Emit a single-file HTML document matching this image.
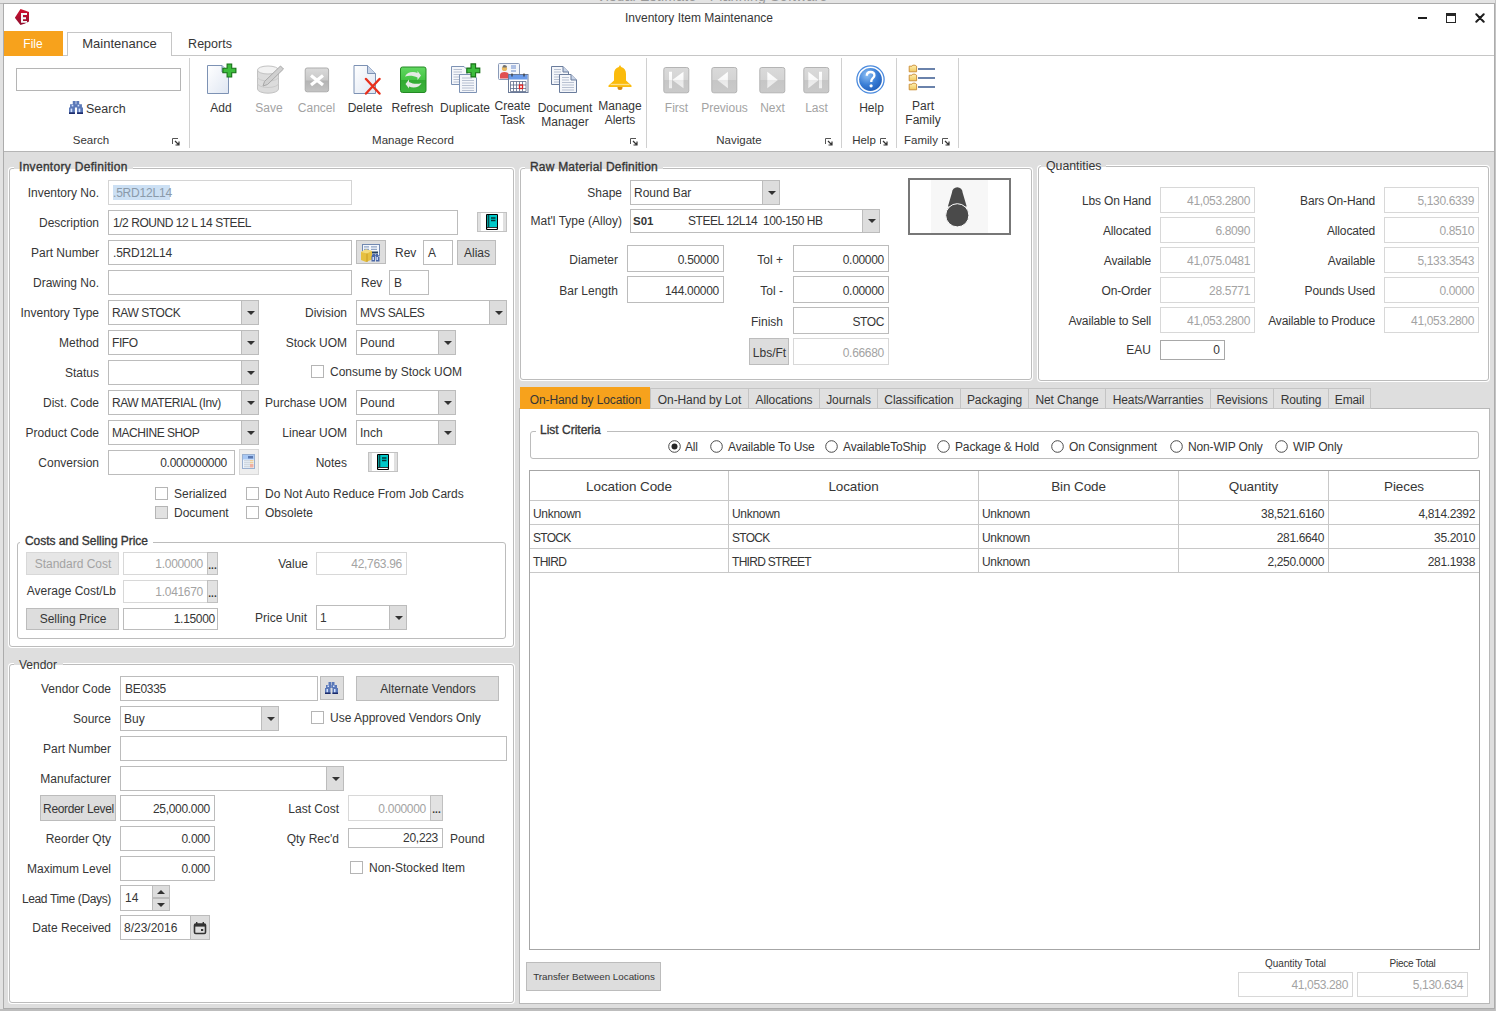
<!DOCTYPE html>
<html><head><meta charset="utf-8"><style>
html,body{margin:0;padding:0;}
body{width:1496px;height:1011px;position:relative;overflow:hidden;background:#e2e2e2;font-family:"Liberation Sans",sans-serif;color:#262626;}
body div, body svg{position:absolute;box-sizing:border-box;}
</style></head><body>

<div style="left:0px;top:0px;width:1496px;height:4px;background:#e4e4e4;"></div>
<div style="left:0px;top:3px;width:1496px;height:1px;background:#b9b9b9;"></div>
<div style="left:562px;top:0;width:300px;height:3px;overflow:hidden;"><div style="left:0;top:-12px;width:300px;height:16px;line-height:16px;font-size:14px;color:#9a9a9a;text-align:center;white-space:pre;letter-spacing:0.25px;">Visual EstiMate - Planning Software</div></div>
<div style="left:3px;top:3px;width:1492px;height:1006px;background:#dedede;border:1px solid #acacac;"></div>
<div style="left:0px;top:1009px;width:1496px;height:2px;background:#bdbdbd;"></div>
<div style="left:1495px;top:0px;width:1px;height:1011px;background:#c4c4c4;"></div>
<div style="left:4px;top:4px;width:1490px;height:148px;background:#fff;"></div>
<div style="left:4px;top:151px;width:1490px;height:1px;background:#b5b5b5;"></div>
<svg style="left:14px;top:8px" width="16" height="18" viewBox="0 0 16 18"><defs><linearGradient id="ag" x1="0" y1="0" x2="0" y2="1"><stop offset="0" stop-color="#d0102e"/><stop offset="1" stop-color="#8e1030"/></linearGradient></defs><path d="M1 9.5L6.5 1L11 2.5L15 4V13.5L11 15.5L6.5 17L1 10Z" fill="url(#ag)"/><path d="M7 5H13V7H9V9.3H12V11.2H9V13H13V14.8H7Z" fill="#f4fbfb"/></svg>
<div style="left:399px;width:600px;text-align:center;top:10.0px;height:16px;line-height:16px;font-size:12px;color:#363636;white-space:pre;">Inventory Item Maintenance</div>
<div style="left:1418px;top:17px;width:9px;height:2px;background:#1e1e1e;"></div>
<div style="left:1446px;top:13px;width:10px;height:10px;background:transparent;border:1px solid #262626;border-top-width:3px;"></div>
<svg style="left:1475px;top:13px" width="10" height="10"><path d="M1.3 1.3L8.7 8.7M8.7 1.3L1.3 8.7" stroke="#1e1e1e" stroke-width="2" stroke-linecap="round"/><rect x="3.5" y="3.5" width="3" height="3" fill="#1e1e1e"/></svg>
<div style="left:4px;top:55px;width:1490px;height:1px;background:#c6c6c6;"></div>
<div style="left:4px;top:31px;width:59px;height:25px;background:#f7a21c;"></div>
<div style="left:-267px;width:600px;text-align:center;top:35.5px;height:16px;line-height:16px;font-size:12px;color:#fff;white-space:pre;">File</div>
<div style="left:67px;top:32px;width:105px;height:24px;background:#fff;border:1px solid #c6c6c6;border-bottom:none;"></div>
<div style="left:-180.5px;width:600px;text-align:center;top:36.0px;height:16px;line-height:16px;font-size:13px;color:#363636;white-space:pre;">Maintenance</div>
<div style="left:-90px;width:600px;text-align:center;top:35.5px;height:16px;line-height:16px;font-size:12.5px;color:#363636;white-space:pre;">Reports</div>
<div style="left:16px;top:68px;width:165px;height:23px;background:#fff;border:1px solid #b5b5b5;"></div>
<svg style="left:69px;top:101px" width="14" height="13" viewBox="0 0 13 12"><path d="M3.5 0H6.2V3H6.5V6H5.5V12H0V6H1V3H3.5Z" fill="#5a78b8"/><path d="M9.5 0H6.8V3H6.5V6H7.5V12H13V6H12V3H9.5Z" fill="#5a78b8"/><rect x="1.5" y="7" width="1.5" height="3.5" fill="#d0e0ff"/><rect x="9" y="7" width="1.5" height="3.5" fill="#d0e0ff"/><rect x="2.5" y="3.5" width="1.5" height="1.5" fill="#d0e0ff"/><rect x="8" y="3.5" width="1.5" height="1.5" fill="#d0e0ff"/><rect x="0" y="10.5" width="5.5" height="1.5" fill="#1a2a6a"/><rect x="7.5" y="10.5" width="5.5" height="1.5" fill="#1a2a6a"/></svg>
<div style="left:86px;top:100.7px;height:16px;line-height:16px;font-size:12.5px;color:#363636;white-space:pre;">Search</div>
<div style="left:-209px;width:600px;text-align:center;top:132.0px;height:16px;line-height:16px;font-size:11.5px;color:#363636;white-space:pre;">Search</div>
<svg style="left:172px;top:138px" width="8" height="8" viewBox="0 0 8 8"><path d="M0.5 6V0.5H6" stroke="#555" fill="none"/><path d="M3 3L7 7M7 3.5V7H3.5" stroke="#333" fill="none" stroke-width="1.2"/></svg>
<div style="left:189px;top:58px;width:1px;height:90px;background:#d0d0d0;"></div>
<div style="left:646px;top:58px;width:1px;height:90px;background:#d0d0d0;"></div>
<div style="left:841px;top:58px;width:1px;height:90px;background:#d0d0d0;"></div>
<div style="left:896px;top:58px;width:1px;height:90px;background:#d0d0d0;"></div>
<div style="left:958px;top:58px;width:1px;height:90px;background:#d0d0d0;"></div>
<svg style="left:206px;top:63px" width="31" height="32" viewBox="0 0 31 32"><defs><linearGradient id="pg" x1="0" y1="0" x2="0" y2="1"><stop offset="0" stop-color="#7ee07e"/><stop offset="1" stop-color="#1f9a1f"/></linearGradient><linearGradient id="dg" x1="0" y1="0" x2="1" y2="1"><stop offset="0" stop-color="#ffffff"/><stop offset="1" stop-color="#dfe6f2"/></linearGradient></defs><path d="M1.5 2.5H16L22.5 9V30.5H1.5Z" fill="url(#dg)" stroke="#7d92b4"/><path d="M16 2.5V9H22.5" fill="#c8d4e8" stroke="#7d92b4"/><path d="M21.099999999999998 1.0H25.7V5.2H29.9V9.8H25.7V14.0H21.099999999999998V9.8H16.9V5.2H21.099999999999998Z" fill="#3cbc3c" stroke="#167016" stroke-width="1.1"/></svg>
<div style="left:-79px;width:600px;text-align:center;top:99.5px;height:16px;line-height:16px;font-size:12px;color:#363636;white-space:pre;">Add</div>
<svg style="left:256px;top:64px" width="29" height="31" viewBox="0 0 29 31"><path d="M1.5 6V25A10.5 4.2 0 0 0 22.5 25V6" fill="#dcdcdc" stroke="#c2c2c2"/><ellipse cx="12" cy="6" rx="10.5" ry="4" fill="#f2f2f2" stroke="#c2c2c2"/><path d="M1.5 13A10.5 4 0 0 0 22.5 13M1.5 19.5A10.5 4 0 0 0 22.5 19.5" fill="none" stroke="#cacaca"/><path d="M7 22L8.5 17.5L24.5 2L27.5 5L11.5 20.5Z" fill="#d0d0d0" stroke="#a8a8a8"/></svg>
<div style="left:-31px;width:600px;text-align:center;top:99.5px;height:16px;line-height:16px;font-size:12px;color:#a3a3a3;white-space:pre;">Save</div>
<svg style="left:304px;top:67px" width="26" height="26" viewBox="0 0 26 26"><defs><linearGradient id="cg" x1="0" y1="0" x2="0" y2="1"><stop offset="0" stop-color="#dadada"/><stop offset="0.5" stop-color="#c8c8c8"/><stop offset="0.55" stop-color="#b4b4b4"/><stop offset="1" stop-color="#c4c4c4"/></linearGradient></defs><rect x="1.2" y="1" width="23.4" height="23.8" rx="2" fill="url(#cg)" stroke="#adadad"/><path d="M7 8.5L19 18M19 8.5L7 18" stroke="#fff" stroke-width="3.2"/></svg>
<div style="left:16.5px;width:600px;text-align:center;top:99.5px;height:16px;line-height:16px;font-size:12px;color:#a3a3a3;white-space:pre;">Cancel</div>
<svg style="left:352px;top:64px" width="30" height="31" viewBox="0 0 30 31"><defs><linearGradient id="dg2" x1="0" y1="0" x2="1" y2="1"><stop offset="0" stop-color="#ffffff"/><stop offset="1" stop-color="#dfe6f2"/></linearGradient></defs><path d="M2 1.5H15.5L23.5 9.5V29.5H2Z" fill="url(#dg2)" stroke="#7d92b4"/><path d="M15.5 1.5V9.5H23.5" fill="#c8d4e8" stroke="#7d92b4"/><path d="M14 15L27.5 29.5M27.5 15L14 29.5" stroke="#e8301c" stroke-width="2.4" stroke-linecap="round"/></svg>
<div style="left:65px;width:600px;text-align:center;top:99.5px;height:16px;line-height:16px;font-size:12px;color:#363636;white-space:pre;">Delete</div>
<svg style="left:400px;top:66px" width="27" height="28" viewBox="0 0 27 28"><defs><linearGradient id="rg" x1="0" y1="0" x2="0" y2="1"><stop offset="0" stop-color="#62d862"/><stop offset="0.5" stop-color="#44c444"/><stop offset="0.52" stop-color="#32aa32"/><stop offset="1" stop-color="#3cb43c"/></linearGradient></defs><rect x="0.5" y="1" width="25.5" height="25.5" rx="2" fill="url(#rg)" stroke="#248a24"/><path d="M5 10.5C7 6 13 5 17.5 7L17.5 5L21 9.5L17.5 14L17.5 11.5C13.5 9.5 9 9 5 10.5Z" fill="#e4eae4"/><path d="M21.5 17C19.5 21.5 13.5 22.5 9 20.5L9 22.5L5.5 18L9 13.5L9 16C13 18 17.5 18.5 21.5 17Z" fill="#e4eae4"/></svg>
<div style="left:112.5px;width:600px;text-align:center;top:99.5px;height:16px;line-height:16px;font-size:12px;color:#363636;white-space:pre;">Refresh</div>
<svg style="left:450px;top:63px" width="31" height="31" viewBox="0 0 31 31"><defs><linearGradient id="pg" x1="0" y1="0" x2="0" y2="1"><stop offset="0" stop-color="#7ee07e"/><stop offset="1" stop-color="#1f9a1f"/></linearGradient><linearGradient id="dg" x1="0" y1="0" x2="1" y2="1"><stop offset="0" stop-color="#ffffff"/><stop offset="1" stop-color="#dfe6f2"/></linearGradient></defs><path d="M1.5 3.5H14L17 6.5V21.5H1.5Z" fill="#f4f6fa" stroke="#7d92b4"/><path d="M3.5 6.5H12M3.5 9H12M3.5 11.5H12M3.5 14H12M3.5 16.5H12M3.5 19H12" stroke="#a8b4c8" stroke-width="0.8"/><path d="M9.5 11.5H23L26.5 15V29.5H9.5Z" fill="#f4f6fa" stroke="#7d92b4"/><path d="M12 15H22M12 17.5H24M12 20H24M12 22.5H24M12 25H24M12 27.5H24" stroke="#a8b4c8" stroke-width="0.8"/><path d="M21.0 0.9000000000000004H25.6V5.1000000000000005H29.8V9.7H25.6V13.9H21.0V9.7H16.8V5.1000000000000005H21.0Z" fill="#3cbc3c" stroke="#167016" stroke-width="1.1"/></svg>
<div style="left:165px;width:600px;text-align:center;top:99.5px;height:16px;line-height:16px;font-size:12px;color:#363636;white-space:pre;">Duplicate</div>
<svg style="left:497px;top:62px" width="32" height="32" viewBox="0 0 32 32"><rect x="1.5" y="1.5" width="21" height="16" rx="1" fill="#f4f6fa" stroke="#8a9ab8"/><circle cx="7.5" cy="6.5" r="2.6" fill="#e8b860"/><path d="M6 3.5A2.6 2.2 0 0 1 10 4.8L9.5 5.5L5.5 5.5Z" fill="#707070"/><path d="M3 16.5V13C3 11 5 10 7.5 10C10 10 12 11 12 13V16.5Z" fill="#e05050"/><path d="M14 4H19M14 6H19M14 9H19" stroke="#5a80c8" stroke-width="0.9"/><rect x="11.5" y="12.5" width="19.5" height="18" fill="#fff" stroke="#6a7a98"/><rect x="12" y="13" width="18.5" height="4.5" fill="#6a9ae8"/><path d="M15 11.5V14.5M27 11.5V14.5" stroke="#333" stroke-width="1.2"/><g fill="none" stroke="#5a6a88" stroke-width="0.8"><path d="M13.5 19.5H29M13.5 23H29M13.5 26.5H29M13.5 29.5H29"/><path d="M13.5 19.5V29.5M16.5 19.5V29.5M19.5 19.5V29.5M22.5 19.5V29.5M25.5 19.5V29.5M29 19.5V29.5"/></g><rect x="22.5" y="23" width="3" height="3.5" fill="none" stroke="#e02020" stroke-width="1.3"/></svg>
<div style="left:472px;top:99px;width:81px;height:30px;font-size:12px;line-height:14px;text-align:center;color:#363636;">Create<br>Task</div>
<svg style="left:550px;top:65px" width="28" height="29" viewBox="0 0 28 29"><path d="M1.5 1.5H13L18.5 7V19.5H1.5Z" fill="#f4f6fa" stroke="#6a7c9c"/><path d="M13 1.5V7H18.5" fill="#c8d4e8" stroke="#6a7c9c"/><path d="M4 4.5H11M4 7H11M4 9.5H16M4 12H16M4 14.5H16M4 17H16" stroke="#a8b4c8" stroke-width="0.8"/><path d="M9.5 9.5H21L26.5 15V27.5H9.5Z" fill="#f4f6fa" stroke="#6a7c9c"/><path d="M21 9.5V15H26.5" fill="#c8d4e8" stroke="#6a7c9c"/><path d="M12 12.5H19M12 15H19M12 17.5H24M12 20H24M12 22.5H24M12 25H24" stroke="#a8b4c8" stroke-width="0.8"/></svg>
<div style="left:524px;top:101px;width:82px;height:30px;font-size:12px;line-height:14px;text-align:center;color:#363636;">Document<br>Manager</div>
<svg style="left:607px;top:63px" width="26" height="28" viewBox="0 0 26 28"><path d="M13 2L14.2 4C17.5 5 19 7.5 19 11V17.5L24.5 22.5V24H1.5V22.5L7 17.5V11C7 7.5 8.5 5 11.8 4Z" fill="#fbbb0c"/><path d="M3.5 21.5H22.5" stroke="#ffe08a" stroke-width="1.3"/><path d="M10.5 24.5A2.5 2.5 0 0 0 15.5 24.5V24H10.5Z" fill="#d88a10"/></svg>
<div style="left:580px;top:99px;width:80px;height:30px;font-size:12px;line-height:14px;text-align:center;color:#363636;">Manage<br>Alerts</div>
<div style="left:113px;width:600px;text-align:center;top:132.0px;height:16px;line-height:16px;font-size:11.5px;color:#363636;white-space:pre;">Manage Record</div>
<svg style="left:630px;top:138px" width="8" height="8" viewBox="0 0 8 8"><path d="M0.5 6V0.5H6" stroke="#555" fill="none"/><path d="M3 3L7 7M7 3.5V7H3.5" stroke="#333" fill="none" stroke-width="1.2"/></svg>
<svg style="left:663px;top:67px" width="27" height="27" viewBox="0 0 27 27"><defs><linearGradient id="nb" x1="0" y1="0" x2="0" y2="1"><stop offset="0" stop-color="#dadada"/><stop offset="0.48" stop-color="#d4d4d4"/><stop offset="0.5" stop-color="#c6c6c6"/><stop offset="1" stop-color="#cacaca"/></linearGradient><linearGradient id="nw" x1="0" y1="0" x2="0" y2="1"><stop offset="0" stop-color="#fff"/><stop offset="0.5" stop-color="#f8f8f8"/><stop offset="0.52" stop-color="#e8e8e8"/><stop offset="1" stop-color="#f0f0f0"/></linearGradient></defs><rect x="0.8" y="0.5" width="25" height="25.3" rx="2" fill="url(#nb)" stroke="#b4b4b4"/><path d="M6 4.7H9V21.2H6Z M9.3 13L20.5 4.7V21.2Z" fill="url(#nw)"/></svg>
<div style="left:376.5px;width:600px;text-align:center;top:99.5px;height:16px;line-height:16px;font-size:12px;color:#a3a3a3;white-space:pre;">First</div>
<svg style="left:711px;top:67px" width="27" height="27" viewBox="0 0 27 27"><defs><linearGradient id="nb" x1="0" y1="0" x2="0" y2="1"><stop offset="0" stop-color="#dadada"/><stop offset="0.48" stop-color="#d4d4d4"/><stop offset="0.5" stop-color="#c6c6c6"/><stop offset="1" stop-color="#cacaca"/></linearGradient><linearGradient id="nw" x1="0" y1="0" x2="0" y2="1"><stop offset="0" stop-color="#fff"/><stop offset="0.5" stop-color="#f8f8f8"/><stop offset="0.52" stop-color="#e8e8e8"/><stop offset="1" stop-color="#f0f0f0"/></linearGradient></defs><rect x="0.8" y="0.5" width="25" height="25.3" rx="2" fill="url(#nb)" stroke="#b4b4b4"/><path d="M6.4 13L16.9 4.7V21.2Z" fill="url(#nw)"/></svg>
<div style="left:424.5px;width:600px;text-align:center;top:99.5px;height:16px;line-height:16px;font-size:12px;color:#a3a3a3;white-space:pre;">Previous</div>
<svg style="left:759px;top:67px" width="27" height="27" viewBox="0 0 27 27"><defs><linearGradient id="nb" x1="0" y1="0" x2="0" y2="1"><stop offset="0" stop-color="#dadada"/><stop offset="0.48" stop-color="#d4d4d4"/><stop offset="0.5" stop-color="#c6c6c6"/><stop offset="1" stop-color="#cacaca"/></linearGradient><linearGradient id="nw" x1="0" y1="0" x2="0" y2="1"><stop offset="0" stop-color="#fff"/><stop offset="0.5" stop-color="#f8f8f8"/><stop offset="0.52" stop-color="#e8e8e8"/><stop offset="1" stop-color="#f0f0f0"/></linearGradient></defs><rect x="0.8" y="0.5" width="25" height="25.3" rx="2" fill="url(#nb)" stroke="#b4b4b4"/><path d="M18.8 13L8.3 4.7V21.2Z" fill="url(#nw)"/></svg>
<div style="left:472.5px;width:600px;text-align:center;top:99.5px;height:16px;line-height:16px;font-size:12px;color:#a3a3a3;white-space:pre;">Next</div>
<svg style="left:803px;top:67px" width="27" height="27" viewBox="0 0 27 27"><defs><linearGradient id="nb" x1="0" y1="0" x2="0" y2="1"><stop offset="0" stop-color="#dadada"/><stop offset="0.48" stop-color="#d4d4d4"/><stop offset="0.5" stop-color="#c6c6c6"/><stop offset="1" stop-color="#cacaca"/></linearGradient><linearGradient id="nw" x1="0" y1="0" x2="0" y2="1"><stop offset="0" stop-color="#fff"/><stop offset="0.5" stop-color="#f8f8f8"/><stop offset="0.52" stop-color="#e8e8e8"/><stop offset="1" stop-color="#f0f0f0"/></linearGradient></defs><rect x="0.8" y="0.5" width="25" height="25.3" rx="2" fill="url(#nb)" stroke="#b4b4b4"/><path d="M16 4.7H19V21.2H16Z M15.7 13L5.3 4.7V21.2Z" fill="url(#nw)"/></svg>
<div style="left:516.5px;width:600px;text-align:center;top:99.5px;height:16px;line-height:16px;font-size:12px;color:#a3a3a3;white-space:pre;">Last</div>
<div style="left:439px;width:600px;text-align:center;top:132.0px;height:16px;line-height:16px;font-size:11.5px;color:#363636;white-space:pre;">Navigate</div>
<svg style="left:825px;top:138px" width="8" height="8" viewBox="0 0 8 8"><path d="M0.5 6V0.5H6" stroke="#555" fill="none"/><path d="M3 3L7 7M7 3.5V7H3.5" stroke="#333" fill="none" stroke-width="1.2"/></svg>
<svg style="left:856px;top:65px" width="29" height="29" viewBox="0 0 29 29"><defs><radialGradient id="hg" cx="0.35" cy="0.3" r="0.8"><stop offset="0" stop-color="#8ec0f4"/><stop offset="0.55" stop-color="#3a7ed6"/><stop offset="1" stop-color="#1e5cb8"/></radialGradient></defs><circle cx="14.5" cy="14.5" r="13.6" fill="#fff" stroke="#4a8ade" stroke-width="1.3"/><circle cx="14.5" cy="14.5" r="11.4" fill="url(#hg)"/><path d="M10.8 10.8C10.8 8.4 12.4 7 14.6 7C16.9 7 18.4 8.4 18.4 10.4C18.4 12.6 15.6 13.3 15.3 15.8V17" stroke="#fff" stroke-width="2.3" fill="none"/><circle cx="15.1" cy="20.8" r="1.6" fill="#fff"/></svg>
<div style="left:571.5px;width:600px;text-align:center;top:99.5px;height:16px;line-height:16px;font-size:12px;color:#363636;white-space:pre;">Help</div>
<div style="left:564px;width:600px;text-align:center;top:132.0px;height:16px;line-height:16px;font-size:11.5px;color:#363636;white-space:pre;">Help</div>
<svg style="left:880px;top:138px" width="8" height="8" viewBox="0 0 8 8"><path d="M0.5 6V0.5H6" stroke="#555" fill="none"/><path d="M3 3L7 7M7 3.5V7H3.5" stroke="#333" fill="none" stroke-width="1.2"/></svg>
<svg style="left:908px;top:64px" width="29" height="27" viewBox="0 0 29 27"><defs><linearGradient id="fo" x1="0" y1="0" x2="0" y2="1"><stop offset="0" stop-color="#fff0b0"/><stop offset="1" stop-color="#f0c860"/></linearGradient></defs><g fill="url(#fo)" stroke="#c88a30" stroke-width="0.9"><path d="M1.2 2.2H4L4.8 1.2H7.2L8 2.2H8.6V7.8H1.2Z"/><path d="M1.2 11.2H4L4.8 10.2H7.2L8 11.2H8.6V16.8H1.2Z"/><path d="M1.2 20.2H4L4.8 19.2H7.2L8 20.2H8.6V25.8H1.2Z"/></g><path d="M10 5H27M10 14H27M10 23H27" stroke="#3a5a90" stroke-width="1.6"/></svg>
<div style="left:882px;top:99px;width:82px;height:30px;font-size:12px;line-height:14px;text-align:center;color:#363636;">Part<br>Family</div>
<div style="left:621px;width:600px;text-align:center;top:132.0px;height:16px;line-height:16px;font-size:11.5px;color:#363636;white-space:pre;">Family</div>
<svg style="left:942px;top:138px" width="8" height="8" viewBox="0 0 8 8"><path d="M0.5 6V0.5H6" stroke="#555" fill="none"/><path d="M3 3L7 7M7 3.5V7H3.5" stroke="#333" fill="none" stroke-width="1.2"/></svg>
<div style="left:9px;top:168px;width:505px;height:479px;background:#fff;border:1px solid #bcbcbc;border-radius:3px;box-shadow:0 0 0 1px #fff;"></div>
<div style="left:14px;top:160px;width:119px;height:9px;background:#dedede;"></div>
<div style="left:14px;top:169px;width:119px;height:1px;background:#fff;"></div>
<div style="left:19px;top:159.0px;height:16px;line-height:16px;font-size:12px;color:#363636;white-space:pre;-webkit-text-stroke:0.35px #363636;letter-spacing:0.3px;">Inventory Definition</div>
<div style="left:-301px;width:400px;text-align:right;top:184.5px;height:16px;line-height:16px;font-size:12px;color:#363636;white-space:pre;">Inventory No.</div>
<div style="left:108px;top:180px;width:244px;height:25px;background:#fff;border:1px solid #d4d4d4;"></div>
<div style="left:113px;top:185px;width:57px;height:15px;background:#cce0f4;"></div>
<div style="left:113px;top:184.5px;height:16px;line-height:16px;font-size:12px;color:#8a9aaa;white-space:pre;letter-spacing:-0.2px;">.5RD12L14</div>
<div style="left:-301px;width:400px;text-align:right;top:214.5px;height:16px;line-height:16px;font-size:12px;color:#363636;white-space:pre;">Description</div>
<div style="left:108px;top:210px;width:350px;height:25px;background:#fff;border:1px solid #bcbcbc;"></div>
<div style="left:113px;top:214.5px;height:16px;line-height:16px;font-size:12px;color:#363636;white-space:pre;letter-spacing:-0.45px;">1/2 ROUND 12 L 14 STEEL</div>
<div style="left:477px;top:212px;width:30px;height:20px;border:1px solid #c2c2c2;background:linear-gradient(90deg,#e0e0e0 0,#e0e0e0 3px,#fff 3px,#fff calc(100% - 3px),#e0e0e0 calc(100% - 3px));"></div>
<svg style="left:486.0px;top:214px" width="12" height="16" viewBox="0 0 12 16"><rect x="0" y="0" width="12" height="16" rx="1" fill="#000"/><rect x="1" y="1" width="1.5" height="12" fill="#0a9a9a"/><rect x="3.2" y="1" width="7.8" height="12" fill="#00c8c8"/><path d="M5 4H9.5M5 6.5H9.5" stroke="#003838" stroke-width="1.3"/><rect x="1.2" y="13.8" width="9.6" height="1.2" fill="#fff"/></svg>
<div style="left:-301px;width:400px;text-align:right;top:244.5px;height:16px;line-height:16px;font-size:12px;color:#363636;white-space:pre;">Part Number</div>
<div style="left:108px;top:240px;width:244px;height:25px;background:#fff;border:1px solid #bcbcbc;"></div>
<div style="left:113px;top:244.5px;height:16px;line-height:16px;font-size:12px;color:#363636;white-space:pre;letter-spacing:-0.2px;">.5RD12L14</div>
<div style="left:356px;top:240px;width:30px;height:24px;background:#dedede;border:1px solid #bcbcbc;"></div>
<svg style="left:360px;top:244px" width="22" height="18" viewBox="0 0 22 18"><rect x="2.5" y="0.5" width="17" height="11" fill="#f2f6fc" stroke="#7088b0"/><path d="M4 2.8H9M11 2.8H17M4 5.3H9M11 5.3H17" stroke="#90a4c4" stroke-width="1.2"/><rect x="8" y="7.5" width="10" height="2" fill="#24405e"/><path d="M1 8L6 5.5L12 7V15.5L6 18L1 16Z" fill="#e6c040"/><path d="M1 8L6 5.5L12 7L7 9.5Z" fill="#f4dc80"/><path d="M7 9.5V18" stroke="#c89a20"/><path d="M12.5 10H15V17.5H11.5V12.5Z M15.5 10H18V12.5H19.5V17.5H16Z" fill="#4a68a8"/><rect x="12.5" y="13" width="1.5" height="3" fill="#c8d8f8"/><rect x="16.5" y="13" width="1.5" height="3" fill="#c8d8f8"/></svg>
<div style="left:395px;top:244.5px;height:16px;line-height:16px;font-size:12px;color:#363636;white-space:pre;">Rev</div>
<div style="left:423px;top:240px;width:30px;height:25px;background:#fff;border:1px solid #bcbcbc;"></div>
<div style="left:428px;top:244.5px;height:16px;line-height:16px;font-size:12px;color:#363636;white-space:pre;">A</div>
<div style="left:457px;top:240px;width:39px;height:25px;background:#dddddd;border:1px solid #bcbcbc;"></div>
<div style="left:177.0px;width:600px;text-align:center;top:244.5px;height:16px;line-height:16px;font-size:12px;color:#363636;white-space:pre;">Alias</div>
<div style="left:-301px;width:400px;text-align:right;top:274.5px;height:16px;line-height:16px;font-size:12px;color:#363636;white-space:pre;">Drawing No.</div>
<div style="left:108px;top:270px;width:244px;height:25px;background:#fff;border:1px solid #bcbcbc;"></div>
<div style="left:361px;top:274.5px;height:16px;line-height:16px;font-size:12px;color:#363636;white-space:pre;">Rev</div>
<div style="left:389px;top:270px;width:40px;height:25px;background:#fff;border:1px solid #bcbcbc;"></div>
<div style="left:394px;top:274.5px;height:16px;line-height:16px;font-size:12px;color:#363636;white-space:pre;">B</div>
<div style="left:-301px;width:400px;text-align:right;top:304.5px;height:16px;line-height:16px;font-size:12px;color:#363636;white-space:pre;">Inventory Type</div>
<div style="left:108px;top:300px;width:151px;height:25px;background:#fff;border:1px solid #bcbcbc;"></div>
<div style="left:241px;top:300px;width:18px;height:25px;background:#dddddd;border:1px solid #bcbcbc;"></div>
<div style="left:112px;top:304.5px;height:16px;line-height:16px;font-size:12px;color:#363636;white-space:pre;letter-spacing:-0.4px;">RAW STOCK</div>
<svg style="left:246.5px;top:310.5px" width="8" height="4"><path d="M0 0H8L4 4Z" fill="#333"/></svg>
<div style="left:-53px;width:400px;text-align:right;top:304.5px;height:16px;line-height:16px;font-size:12px;color:#363636;white-space:pre;">Division</div>
<div style="left:356px;top:300px;width:151px;height:25px;background:#fff;border:1px solid #bcbcbc;"></div>
<div style="left:489px;top:300px;width:18px;height:25px;background:#dddddd;border:1px solid #bcbcbc;"></div>
<div style="left:360px;top:304.5px;height:16px;line-height:16px;font-size:12px;color:#363636;white-space:pre;letter-spacing:-0.4px;">MVS SALES</div>
<svg style="left:494.5px;top:310.5px" width="8" height="4"><path d="M0 0H8L4 4Z" fill="#333"/></svg>
<div style="left:-301px;width:400px;text-align:right;top:334.5px;height:16px;line-height:16px;font-size:12px;color:#363636;white-space:pre;">Method</div>
<div style="left:108px;top:330px;width:151px;height:25px;background:#fff;border:1px solid #bcbcbc;"></div>
<div style="left:241px;top:330px;width:18px;height:25px;background:#dddddd;border:1px solid #bcbcbc;"></div>
<div style="left:112px;top:334.5px;height:16px;line-height:16px;font-size:12px;color:#363636;white-space:pre;letter-spacing:-0.4px;">FIFO</div>
<svg style="left:246.5px;top:340.5px" width="8" height="4"><path d="M0 0H8L4 4Z" fill="#333"/></svg>
<div style="left:-53px;width:400px;text-align:right;top:334.5px;height:16px;line-height:16px;font-size:12px;color:#363636;white-space:pre;">Stock UOM</div>
<div style="left:356px;top:330px;width:100px;height:25px;background:#fff;border:1px solid #bcbcbc;"></div>
<div style="left:438px;top:330px;width:18px;height:25px;background:#dddddd;border:1px solid #bcbcbc;"></div>
<div style="left:360px;top:334.5px;height:16px;line-height:16px;font-size:12px;color:#363636;white-space:pre;">Pound</div>
<svg style="left:443.5px;top:340.5px" width="8" height="4"><path d="M0 0H8L4 4Z" fill="#333"/></svg>
<div style="left:-301px;width:400px;text-align:right;top:364.5px;height:16px;line-height:16px;font-size:12px;color:#363636;white-space:pre;">Status</div>
<div style="left:108px;top:360px;width:151px;height:25px;background:#fff;border:1px solid #bcbcbc;"></div>
<div style="left:241px;top:360px;width:18px;height:25px;background:#dddddd;border:1px solid #bcbcbc;"></div>
<svg style="left:246.5px;top:370.5px" width="8" height="4"><path d="M0 0H8L4 4Z" fill="#333"/></svg>
<div style="left:311px;top:365px;width:13px;height:13px;background:#fff;border:1px solid #b5b5b5;"></div>
<div style="left:330px;top:363.5px;height:16px;line-height:16px;font-size:12px;color:#363636;white-space:pre;">Consume by Stock UOM</div>
<div style="left:-301px;width:400px;text-align:right;top:394.5px;height:16px;line-height:16px;font-size:12px;color:#363636;white-space:pre;">Dist. Code</div>
<div style="left:108px;top:390px;width:151px;height:25px;background:#fff;border:1px solid #bcbcbc;"></div>
<div style="left:241px;top:390px;width:18px;height:25px;background:#dddddd;border:1px solid #bcbcbc;"></div>
<div style="left:112px;top:394.5px;height:16px;line-height:16px;font-size:12px;color:#363636;white-space:pre;letter-spacing:-0.45px;">RAW MATERIAL (Inv)</div>
<svg style="left:246.5px;top:400.5px" width="8" height="4"><path d="M0 0H8L4 4Z" fill="#333"/></svg>
<div style="left:-53px;width:400px;text-align:right;top:394.5px;height:16px;line-height:16px;font-size:12px;color:#363636;white-space:pre;">Purchase UOM</div>
<div style="left:356px;top:390px;width:100px;height:25px;background:#fff;border:1px solid #bcbcbc;"></div>
<div style="left:438px;top:390px;width:18px;height:25px;background:#dddddd;border:1px solid #bcbcbc;"></div>
<div style="left:360px;top:394.5px;height:16px;line-height:16px;font-size:12px;color:#363636;white-space:pre;">Pound</div>
<svg style="left:443.5px;top:400.5px" width="8" height="4"><path d="M0 0H8L4 4Z" fill="#333"/></svg>
<div style="left:-301px;width:400px;text-align:right;top:424.5px;height:16px;line-height:16px;font-size:12px;color:#363636;white-space:pre;">Product Code</div>
<div style="left:108px;top:420px;width:151px;height:25px;background:#fff;border:1px solid #bcbcbc;"></div>
<div style="left:241px;top:420px;width:18px;height:25px;background:#dddddd;border:1px solid #bcbcbc;"></div>
<div style="left:112px;top:424.5px;height:16px;line-height:16px;font-size:12px;color:#363636;white-space:pre;letter-spacing:-0.45px;">MACHINE SHOP</div>
<svg style="left:246.5px;top:430.5px" width="8" height="4"><path d="M0 0H8L4 4Z" fill="#333"/></svg>
<div style="left:-53px;width:400px;text-align:right;top:424.5px;height:16px;line-height:16px;font-size:12px;color:#363636;white-space:pre;">Linear UOM</div>
<div style="left:356px;top:420px;width:100px;height:25px;background:#fff;border:1px solid #bcbcbc;"></div>
<div style="left:438px;top:420px;width:18px;height:25px;background:#dddddd;border:1px solid #bcbcbc;"></div>
<div style="left:360px;top:424.5px;height:16px;line-height:16px;font-size:12px;color:#363636;white-space:pre;">Inch</div>
<svg style="left:443.5px;top:430.5px" width="8" height="4"><path d="M0 0H8L4 4Z" fill="#333"/></svg>
<div style="left:-301px;width:400px;text-align:right;top:454.5px;height:16px;line-height:16px;font-size:12px;color:#363636;white-space:pre;">Conversion</div>
<div style="left:108px;top:450px;width:127px;height:25px;background:#fff;border:1px solid #bcbcbc;"></div>
<div style="left:-173px;width:400px;text-align:right;top:454.5px;height:16px;line-height:16px;font-size:12px;color:#363636;white-space:pre;letter-spacing:-0.3px;">0.000000000</div>
<div style="left:239px;top:449px;width:20px;height:26px;background:#eeeeee;border:1px solid #d8d8d8;"></div>
<svg style="left:242px;top:454px" width="13" height="15" viewBox="0 0 13 15"><rect x="0.5" y="0.5" width="12" height="14" fill="#eef4fc" stroke="#9ab0d0"/><rect x="1" y="1" width="11" height="4.5" fill="#a8c8f4"/><rect x="6" y="2" width="5" height="2.5" fill="#5a78b0"/><path d="M2 6.8H8M2 8.8H8M2 10.8H8M2 12.8H8" stroke="#c0c8d0" stroke-width="0.9"/><path d="M8 6.8H11.5M8 8.8H11.5" stroke="#f0b860" stroke-width="0.9"/><rect x="8" y="10" width="3.5" height="3.5" fill="#f0b0a0"/></svg>
<div style="left:-53px;width:400px;text-align:right;top:454.5px;height:16px;line-height:16px;font-size:12px;color:#363636;white-space:pre;">Notes</div>
<div style="left:368px;top:452px;width:30px;height:20px;border:1px solid #c2c2c2;background:linear-gradient(90deg,#e0e0e0 0,#e0e0e0 3px,#fff 3px,#fff calc(100% - 3px),#e0e0e0 calc(100% - 3px));"></div>
<svg style="left:377.0px;top:454px" width="12" height="16" viewBox="0 0 12 16"><rect x="0" y="0" width="12" height="16" rx="1" fill="#000"/><rect x="1" y="1" width="1.5" height="12" fill="#0a9a9a"/><rect x="3.2" y="1" width="7.8" height="12" fill="#00c8c8"/><path d="M5 4H9.5M5 6.5H9.5" stroke="#003838" stroke-width="1.3"/><rect x="1.2" y="13.8" width="9.6" height="1.2" fill="#fff"/></svg>
<div style="left:155px;top:487px;width:13px;height:13px;background:#fff;border:1px solid #b5b5b5;"></div>
<div style="left:174px;top:485.5px;height:16px;line-height:16px;font-size:12px;color:#363636;white-space:pre;">Serialized</div>
<div style="left:246px;top:487px;width:13px;height:13px;background:#fff;border:1px solid #b5b5b5;"></div>
<div style="left:265px;top:485.5px;height:16px;line-height:16px;font-size:12px;color:#363636;white-space:pre;">Do Not Auto Reduce From Job Cards</div>
<div style="left:155px;top:506px;width:13px;height:13px;background:#e2e2e2;border:1px solid #b5b5b5;"></div>
<div style="left:174px;top:504.5px;height:16px;line-height:16px;font-size:12px;color:#363636;white-space:pre;">Document</div>
<div style="left:246px;top:506px;width:13px;height:13px;background:#fff;border:1px solid #b5b5b5;"></div>
<div style="left:265px;top:504.5px;height:16px;line-height:16px;font-size:12px;color:#363636;white-space:pre;">Obsolete</div>
<div style="left:17px;top:542px;width:489px;height:97px;background:#fff;border:1px solid #bcbcbc;border-radius:3px;box-shadow:0 0 0 1px #fff;"></div>
<div style="left:20px;top:534px;width:133px;height:9px;background:#fff;"></div>
<div style="left:20px;top:543px;width:133px;height:1px;background:#fff;"></div>
<div style="left:25px;top:533.0px;height:16px;line-height:16px;font-size:12px;color:#363636;white-space:pre;-webkit-text-stroke:0.35px #363636;letter-spacing:-0.05px;">Costs and Selling Price</div>
<div style="left:26px;top:552px;width:93px;height:23px;background:#e6e6e6;border:1px solid #d8d8d8;"></div>
<div style="left:-227.0px;width:600px;text-align:center;top:555.5px;height:16px;line-height:16px;font-size:12px;color:#a3a3a3;white-space:pre;">Standard Cost</div>
<div style="left:123px;top:552px;width:85px;height:23px;background:#fff;border:1px solid #d8d8d8;"></div>
<div style="left:-197px;width:400px;text-align:right;top:555.5px;height:16px;line-height:16px;font-size:12px;color:#a3a3a3;white-space:pre;letter-spacing:-0.3px;">1.000000</div>
<div style="left:207px;top:552px;width:11px;height:23px;background:#e2e2e2;border:1px solid #c0c0c0;"></div>
<div style="left:-87.5px;width:600px;text-align:center;top:558.0px;height:16px;line-height:16px;font-size:10px;color:#363636;font-weight:bold;white-space:pre;">...</div>
<div style="left:-92px;width:400px;text-align:right;top:555.5px;height:16px;line-height:16px;font-size:12px;color:#363636;white-space:pre;">Value</div>
<div style="left:316px;top:552px;width:91px;height:23px;background:#fff;border:1px solid #d8d8d8;"></div>
<div style="left:2px;width:400px;text-align:right;top:555.5px;height:16px;line-height:16px;font-size:12px;color:#a3a3a3;white-space:pre;letter-spacing:-0.3px;">42,763.96</div>
<div style="left:-284px;width:400px;text-align:right;top:583.0px;height:16px;line-height:16px;font-size:12px;color:#363636;white-space:pre;">Average Cost/Lb</div>
<div style="left:123px;top:580px;width:85px;height:23px;background:#fff;border:1px solid #d8d8d8;"></div>
<div style="left:-197px;width:400px;text-align:right;top:583.5px;height:16px;line-height:16px;font-size:12px;color:#a3a3a3;white-space:pre;letter-spacing:-0.3px;">1.041670</div>
<div style="left:207px;top:580px;width:11px;height:23px;background:#e2e2e2;border:1px solid #c0c0c0;"></div>
<div style="left:-87.5px;width:600px;text-align:center;top:586.0px;height:16px;line-height:16px;font-size:10px;color:#363636;font-weight:bold;white-space:pre;">...</div>
<div style="left:26px;top:608px;width:93px;height:22px;background:#dddddd;border:1px solid #bcbcbc;"></div>
<div style="left:-227.0px;width:600px;text-align:center;top:611.0px;height:16px;line-height:16px;font-size:12px;color:#363636;white-space:pre;">Selling Price</div>
<div style="left:123px;top:608px;width:95px;height:22px;background:#fff;border:1px solid #bcbcbc;"></div>
<div style="left:-185px;width:400px;text-align:right;top:611.0px;height:16px;line-height:16px;font-size:12px;color:#363636;white-space:pre;letter-spacing:-0.3px;">1.15000</div>
<div style="left:-93px;width:400px;text-align:right;top:609.5px;height:16px;line-height:16px;font-size:12px;color:#363636;white-space:pre;">Price Unit</div>
<div style="left:316px;top:605px;width:91px;height:25px;background:#fff;border:1px solid #bcbcbc;"></div>
<div style="left:389px;top:605px;width:18px;height:25px;background:#dddddd;border:1px solid #bcbcbc;"></div>
<div style="left:320px;top:609.5px;height:16px;line-height:16px;font-size:12px;color:#363636;white-space:pre;">1</div>
<svg style="left:394.5px;top:615.5px" width="8" height="4"><path d="M0 0H8L4 4Z" fill="#333"/></svg>
<div style="left:9px;top:664px;width:505px;height:339px;background:#fff;border:1px solid #bcbcbc;border-radius:3px;box-shadow:0 0 0 1px #fff;"></div>
<div style="left:14px;top:656px;width:49px;height:9px;background:#dedede;"></div>
<div style="left:14px;top:665px;width:49px;height:1px;background:#fff;"></div>
<div style="left:19px;top:656.5px;height:16px;line-height:16px;font-size:12px;color:#363636;white-space:pre;">Vendor</div>
<div style="left:-289px;width:400px;text-align:right;top:680.5px;height:16px;line-height:16px;font-size:12px;color:#363636;white-space:pre;">Vendor Code</div>
<div style="left:120px;top:676px;width:198px;height:25px;background:#fff;border:1px solid #bcbcbc;"></div>
<div style="left:125px;top:680.5px;height:16px;line-height:16px;font-size:12px;color:#363636;white-space:pre;letter-spacing:-0.3px;">BE0335</div>
<div style="left:320px;top:676px;width:24px;height:24px;background:#dedede;border:1px solid #bcbcbc;"></div>
<svg style="left:325px;top:682px" width="13" height="12" viewBox="0 0 13 12"><path d="M3.5 0H6.2V3H6.5V6H5.5V12H0V6H1V3H3.5Z" fill="#5a78b8"/><path d="M9.5 0H6.8V3H6.5V6H7.5V12H13V6H12V3H9.5Z" fill="#5a78b8"/><rect x="1.5" y="7" width="1.5" height="3.5" fill="#d0e0ff"/><rect x="9" y="7" width="1.5" height="3.5" fill="#d0e0ff"/><rect x="2.5" y="3.5" width="1.5" height="1.5" fill="#d0e0ff"/><rect x="8" y="3.5" width="1.5" height="1.5" fill="#d0e0ff"/><rect x="0" y="10.5" width="5.5" height="1.5" fill="#1a2a6a"/><rect x="7.5" y="10.5" width="5.5" height="1.5" fill="#1a2a6a"/></svg>
<div style="left:356px;top:676px;width:143px;height:25px;background:#dddddd;border:1px solid #bcbcbc;"></div>
<div style="left:128.0px;width:600px;text-align:center;top:680.5px;height:16px;line-height:16px;font-size:12px;color:#363636;white-space:pre;">Alternate Vendors</div>
<div style="left:-289px;width:400px;text-align:right;top:710.5px;height:16px;line-height:16px;font-size:12px;color:#363636;white-space:pre;">Source</div>
<div style="left:120px;top:706px;width:159px;height:25px;background:#fff;border:1px solid #bcbcbc;"></div>
<div style="left:261px;top:706px;width:18px;height:25px;background:#dddddd;border:1px solid #bcbcbc;"></div>
<div style="left:124px;top:710.5px;height:16px;line-height:16px;font-size:12px;color:#363636;white-space:pre;">Buy</div>
<svg style="left:266.5px;top:716.5px" width="8" height="4"><path d="M0 0H8L4 4Z" fill="#333"/></svg>
<div style="left:311px;top:711px;width:13px;height:13px;background:#fff;border:1px solid #b5b5b5;"></div>
<div style="left:330px;top:709.5px;height:16px;line-height:16px;font-size:12px;color:#363636;white-space:pre;">Use Approved Vendors Only</div>
<div style="left:-289px;width:400px;text-align:right;top:740.5px;height:16px;line-height:16px;font-size:12px;color:#363636;white-space:pre;">Part Number</div>
<div style="left:120px;top:736px;width:387px;height:25px;background:#fff;border:1px solid #bcbcbc;"></div>
<div style="left:-289px;width:400px;text-align:right;top:770.5px;height:16px;line-height:16px;font-size:12px;color:#363636;white-space:pre;">Manufacturer</div>
<div style="left:120px;top:766px;width:224px;height:25px;background:#fff;border:1px solid #bcbcbc;"></div>
<div style="left:326px;top:766px;width:18px;height:25px;background:#dddddd;border:1px solid #bcbcbc;"></div>
<svg style="left:331.5px;top:776.5px" width="8" height="4"><path d="M0 0H8L4 4Z" fill="#333"/></svg>
<div style="left:40px;top:795px;width:76px;height:26px;background:#dddddd;border:1px solid #bcbcbc;"></div>
<div style="left:-221.5px;width:600px;text-align:center;top:801.0px;height:16px;line-height:16px;font-size:12px;color:#363636;white-space:pre;letter-spacing:-0.35px;">Reorder Level</div>
<div style="left:120px;top:795px;width:95px;height:26px;background:#fff;border:1px solid #bcbcbc;"></div>
<div style="left:-190px;width:400px;text-align:right;top:801.0px;height:16px;line-height:16px;font-size:12px;color:#363636;white-space:pre;letter-spacing:-0.3px;">25,000.000</div>
<div style="left:-61px;width:400px;text-align:right;top:801.0px;height:16px;line-height:16px;font-size:12px;color:#363636;white-space:pre;">Last Cost</div>
<div style="left:348px;top:795px;width:83px;height:26px;background:#fff;border:1px solid #d8d8d8;"></div>
<div style="left:26px;width:400px;text-align:right;top:801.0px;height:16px;line-height:16px;font-size:12px;color:#a3a3a3;white-space:pre;letter-spacing:-0.3px;">0.000000</div>
<div style="left:430px;top:795px;width:13px;height:26px;background:#e2e2e2;border:1px solid #c0c0c0;"></div>
<div style="left:136.5px;width:600px;text-align:center;top:802.0px;height:16px;line-height:16px;font-size:10px;color:#363636;font-weight:bold;white-space:pre;">...</div>
<div style="left:-289px;width:400px;text-align:right;top:830.5px;height:16px;line-height:16px;font-size:12px;color:#363636;white-space:pre;">Reorder Qty</div>
<div style="left:120px;top:826px;width:95px;height:25px;background:#fff;border:1px solid #bcbcbc;"></div>
<div style="left:-190px;width:400px;text-align:right;top:830.5px;height:16px;line-height:16px;font-size:12px;color:#363636;white-space:pre;letter-spacing:-0.3px;">0.000</div>
<div style="left:-61px;width:400px;text-align:right;top:830.5px;height:16px;line-height:16px;font-size:12px;color:#363636;white-space:pre;">Qty Rec'd</div>
<div style="left:348px;top:828px;width:95px;height:20px;background:#fff;border:1px solid #bcbcbc;"></div>
<div style="left:38px;width:400px;text-align:right;top:830.0px;height:16px;line-height:16px;font-size:12px;color:#363636;white-space:pre;letter-spacing:-0.3px;">20,223</div>
<div style="left:450px;top:830.5px;height:16px;line-height:16px;font-size:12px;color:#363636;white-space:pre;">Pound</div>
<div style="left:-289px;width:400px;text-align:right;top:860.5px;height:16px;line-height:16px;font-size:12px;color:#363636;white-space:pre;">Maximum Level</div>
<div style="left:120px;top:856px;width:95px;height:25px;background:#fff;border:1px solid #bcbcbc;"></div>
<div style="left:-190px;width:400px;text-align:right;top:860.5px;height:16px;line-height:16px;font-size:12px;color:#363636;white-space:pre;letter-spacing:-0.3px;">0.000</div>
<div style="left:350px;top:861px;width:13px;height:13px;background:#fff;border:1px solid #b5b5b5;"></div>
<div style="left:369px;top:859.5px;height:16px;line-height:16px;font-size:12px;color:#363636;white-space:pre;">Non-Stocked Item</div>
<div style="left:-289px;width:400px;text-align:right;top:890.5px;height:16px;line-height:16px;font-size:12px;color:#363636;white-space:pre;letter-spacing:-0.35px;">Lead Time (Days)</div>
<div style="left:120px;top:885px;width:50px;height:26px;background:#fff;border:1px solid #bcbcbc;"></div>
<div style="left:125px;top:890.0px;height:16px;line-height:16px;font-size:12px;color:#363636;white-space:pre;">14</div>
<div style="left:152px;top:885px;width:18px;height:26px;background:#dddddd;border:1px solid #bcbcbc;"></div>
<div style="left:152px;top:897px;width:18px;height:2px;background:#bcbcbc;"></div>
<svg style="left:157px;top:889px" width="8" height="20"><path d="M0 5L4 1L8 5Z M0 14L8 14L4 18Z" fill="#333"/></svg>
<div style="left:-289px;width:400px;text-align:right;top:919.5px;height:16px;line-height:16px;font-size:12px;color:#363636;white-space:pre;">Date Received</div>
<div style="left:120px;top:915px;width:90px;height:25px;background:#fff;border:1px solid #bcbcbc;"></div>
<div style="left:124px;top:919.5px;height:16px;line-height:16px;font-size:12px;color:#363636;white-space:pre;">8/23/2016</div>
<div style="left:190px;top:915px;width:20px;height:25px;background:#dddddd;border:1px solid #bcbcbc;"></div>
<svg style="left:193px;top:921px" width="14" height="14" viewBox="0 0 14 14"><rect x="1.5" y="3" width="11" height="9.5" rx="1.2" fill="none" stroke="#333" stroke-width="1.6"/><rect x="1.5" y="3" width="11" height="2.6" fill="#333"/><rect x="3" y="1" width="1.4" height="2.5" fill="#333"/><rect x="9.6" y="1" width="1.4" height="2.5" fill="#333"/><rect x="8" y="8" width="2.2" height="2" fill="#333"/></svg>
<div style="left:520px;top:168px;width:512px;height:212px;background:#fff;border:1px solid #bcbcbc;border-radius:3px;box-shadow:0 0 0 1px #fff;"></div>
<div style="left:525px;top:160px;width:138px;height:9px;background:#dedede;"></div>
<div style="left:525px;top:169px;width:138px;height:1px;background:#fff;"></div>
<div style="left:530px;top:159.0px;height:16px;line-height:16px;font-size:12px;color:#363636;white-space:pre;-webkit-text-stroke:0.35px #363636;letter-spacing:0.2px;">Raw Material Definition</div>
<div style="left:222px;width:400px;text-align:right;top:184.5px;height:16px;line-height:16px;font-size:12px;color:#363636;white-space:pre;">Shape</div>
<div style="left:630px;top:180px;width:150px;height:25px;background:#fff;border:1px solid #bcbcbc;"></div>
<div style="left:762px;top:180px;width:18px;height:25px;background:#dddddd;border:1px solid #bcbcbc;"></div>
<div style="left:634px;top:184.5px;height:16px;line-height:16px;font-size:12px;color:#363636;white-space:pre;">Round Bar</div>
<svg style="left:767.5px;top:190.5px" width="8" height="4"><path d="M0 0H8L4 4Z" fill="#333"/></svg>
<div style="left:222px;width:400px;text-align:right;top:213.0px;height:16px;line-height:16px;font-size:12px;color:#363636;white-space:pre;">Mat'l Type (Alloy)</div>
<div style="left:630px;top:209px;width:250px;height:24px;background:#fff;border:1px solid #bcbcbc;"></div>
<div style="left:862px;top:209px;width:18px;height:24px;background:#dddddd;border:1px solid #bcbcbc;"></div>
<svg style="left:867.5px;top:219.0px" width="8" height="4"><path d="M0 0H8L4 4Z" fill="#333"/></svg>
<div style="left:633px;top:213.0px;height:16px;line-height:16px;font-size:11.5px;color:#363636;font-weight:bold;white-space:pre;">S01</div>
<div style="left:688px;top:213.0px;height:16px;line-height:16px;font-size:12px;color:#363636;white-space:pre;letter-spacing:-0.45px;">STEEL 12L14  100-150 HB</div>
<div style="left:908px;top:178px;width:103px;height:57px;background:#fff;border:1px solid #777;border-width:2px;"></div>
<div style="left:931px;top:180px;width:57px;height:53px;background:#f7f7f7;"></div>
<svg style="left:944px;top:185px" width="27" height="43" viewBox="0 0 27 43"><path d="M8 7.5A5.3 5.3 0 0 1 18.6 7.5L22.7 21.5H3.9Z" fill="#4a4a4a"/><circle cx="13.3" cy="30.3" r="11.6" fill="#4a4a4a" stroke="#fff" stroke-width="1"/></svg>
<div style="left:218px;width:400px;text-align:right;top:251.5px;height:16px;line-height:16px;font-size:12px;color:#363636;white-space:pre;">Diameter</div>
<div style="left:627px;top:245px;width:97px;height:27px;background:#fff;border:1px solid #bcbcbc;"></div>
<div style="left:319px;width:400px;text-align:right;top:251.5px;height:16px;line-height:16px;font-size:12px;color:#363636;white-space:pre;letter-spacing:-0.3px;">0.50000</div>
<div style="left:218px;width:400px;text-align:right;top:282.5px;height:16px;line-height:16px;font-size:12px;color:#363636;white-space:pre;">Bar Length</div>
<div style="left:627px;top:276px;width:97px;height:27px;background:#fff;border:1px solid #bcbcbc;"></div>
<div style="left:319px;width:400px;text-align:right;top:282.5px;height:16px;line-height:16px;font-size:12px;color:#363636;white-space:pre;letter-spacing:-0.3px;">144.00000</div>
<div style="left:383px;width:400px;text-align:right;top:251.5px;height:16px;line-height:16px;font-size:12px;color:#363636;white-space:pre;">Tol +</div>
<div style="left:793px;top:245px;width:96px;height:27px;background:#fff;border:1px solid #bcbcbc;"></div>
<div style="left:484px;width:400px;text-align:right;top:251.5px;height:16px;line-height:16px;font-size:12px;color:#363636;white-space:pre;letter-spacing:-0.3px;">0.00000</div>
<div style="left:383px;width:400px;text-align:right;top:282.5px;height:16px;line-height:16px;font-size:12px;color:#363636;white-space:pre;">Tol -</div>
<div style="left:793px;top:276px;width:96px;height:27px;background:#fff;border:1px solid #bcbcbc;"></div>
<div style="left:484px;width:400px;text-align:right;top:282.5px;height:16px;line-height:16px;font-size:12px;color:#363636;white-space:pre;letter-spacing:-0.3px;">0.00000</div>
<div style="left:383px;width:400px;text-align:right;top:313.5px;height:16px;line-height:16px;font-size:12px;color:#363636;white-space:pre;">Finish</div>
<div style="left:793px;top:307px;width:96px;height:27px;background:#fff;border:1px solid #bcbcbc;"></div>
<div style="left:484px;width:400px;text-align:right;top:313.5px;height:16px;line-height:16px;font-size:12px;color:#363636;white-space:pre;letter-spacing:-0.4px;">STOC</div>
<div style="left:749px;top:338px;width:40px;height:27px;background:#dddddd;border:1px solid #bcbcbc;"></div>
<div style="left:469.5px;width:600px;text-align:center;top:344.5px;height:16px;line-height:16px;font-size:12px;color:#363636;white-space:pre;">Lbs/Ft</div>
<div style="left:793px;top:338px;width:96px;height:27px;background:#fff;border:1px solid #d8d8d8;"></div>
<div style="left:484px;width:400px;text-align:right;top:344.5px;height:16px;line-height:16px;font-size:12px;color:#a3a3a3;white-space:pre;letter-spacing:-0.3px;">0.66680</div>
<div style="left:1038px;top:166px;width:451px;height:215px;background:#fff;border:1px solid #bcbcbc;border-radius:3px;box-shadow:0 0 0 1px #fff;"></div>
<div style="left:1041px;top:158px;width:65px;height:9px;background:#dedede;"></div>
<div style="left:1041px;top:167px;width:65px;height:1px;background:#fff;"></div>
<div style="left:1046px;top:158.0px;height:16px;line-height:16px;font-size:12.3px;color:#363636;white-space:pre;">Quantities</div>
<div style="left:751px;width:400px;text-align:right;top:192.5px;height:16px;line-height:16px;font-size:12px;color:#363636;white-space:pre;letter-spacing:-0.15px;">Lbs On Hand</div>
<div style="left:1160px;top:187px;width:95px;height:26px;background:#fff;border:1px solid #d8d8d8;"></div>
<div style="left:850px;width:400px;text-align:right;top:193.0px;height:16px;line-height:16px;font-size:12px;color:#a3a3a3;white-space:pre;letter-spacing:-0.35px;">41,053.2800</div>
<div style="left:975px;width:400px;text-align:right;top:192.5px;height:16px;line-height:16px;font-size:12px;color:#363636;white-space:pre;letter-spacing:-0.15px;">Bars On-Hand</div>
<div style="left:1384px;top:187px;width:95px;height:26px;background:#fff;border:1px solid #d8d8d8;"></div>
<div style="left:1074px;width:400px;text-align:right;top:193.0px;height:16px;line-height:16px;font-size:12px;color:#a3a3a3;white-space:pre;letter-spacing:-0.35px;">5,130.6339</div>
<div style="left:751px;width:400px;text-align:right;top:222.5px;height:16px;line-height:16px;font-size:12px;color:#363636;white-space:pre;letter-spacing:-0.15px;">Allocated</div>
<div style="left:1160px;top:217px;width:95px;height:26px;background:#fff;border:1px solid #d8d8d8;"></div>
<div style="left:850px;width:400px;text-align:right;top:223.0px;height:16px;line-height:16px;font-size:12px;color:#a3a3a3;white-space:pre;letter-spacing:-0.35px;">6.8090</div>
<div style="left:975px;width:400px;text-align:right;top:222.5px;height:16px;line-height:16px;font-size:12px;color:#363636;white-space:pre;letter-spacing:-0.15px;">Allocated</div>
<div style="left:1384px;top:217px;width:95px;height:26px;background:#fff;border:1px solid #d8d8d8;"></div>
<div style="left:1074px;width:400px;text-align:right;top:223.0px;height:16px;line-height:16px;font-size:12px;color:#a3a3a3;white-space:pre;letter-spacing:-0.35px;">0.8510</div>
<div style="left:751px;width:400px;text-align:right;top:252.5px;height:16px;line-height:16px;font-size:12px;color:#363636;white-space:pre;letter-spacing:-0.15px;">Available</div>
<div style="left:1160px;top:247px;width:95px;height:26px;background:#fff;border:1px solid #d8d8d8;"></div>
<div style="left:850px;width:400px;text-align:right;top:253.0px;height:16px;line-height:16px;font-size:12px;color:#a3a3a3;white-space:pre;letter-spacing:-0.35px;">41,075.0481</div>
<div style="left:975px;width:400px;text-align:right;top:252.5px;height:16px;line-height:16px;font-size:12px;color:#363636;white-space:pre;letter-spacing:-0.15px;">Available</div>
<div style="left:1384px;top:247px;width:95px;height:26px;background:#fff;border:1px solid #d8d8d8;"></div>
<div style="left:1074px;width:400px;text-align:right;top:253.0px;height:16px;line-height:16px;font-size:12px;color:#a3a3a3;white-space:pre;letter-spacing:-0.35px;">5,133.3543</div>
<div style="left:751px;width:400px;text-align:right;top:282.5px;height:16px;line-height:16px;font-size:12px;color:#363636;white-space:pre;letter-spacing:-0.15px;">On-Order</div>
<div style="left:1160px;top:277px;width:95px;height:26px;background:#fff;border:1px solid #d8d8d8;"></div>
<div style="left:850px;width:400px;text-align:right;top:283.0px;height:16px;line-height:16px;font-size:12px;color:#a3a3a3;white-space:pre;letter-spacing:-0.35px;">28.5771</div>
<div style="left:975px;width:400px;text-align:right;top:282.5px;height:16px;line-height:16px;font-size:12px;color:#363636;white-space:pre;letter-spacing:-0.15px;">Pounds Used</div>
<div style="left:1384px;top:277px;width:95px;height:26px;background:#fff;border:1px solid #d8d8d8;"></div>
<div style="left:1074px;width:400px;text-align:right;top:283.0px;height:16px;line-height:16px;font-size:12px;color:#a3a3a3;white-space:pre;letter-spacing:-0.35px;">0.0000</div>
<div style="left:751px;width:400px;text-align:right;top:312.5px;height:16px;line-height:16px;font-size:12px;color:#363636;white-space:pre;letter-spacing:-0.15px;">Available to Sell</div>
<div style="left:1160px;top:307px;width:95px;height:26px;background:#fff;border:1px solid #d8d8d8;"></div>
<div style="left:850px;width:400px;text-align:right;top:313.0px;height:16px;line-height:16px;font-size:12px;color:#a3a3a3;white-space:pre;letter-spacing:-0.35px;">41,053.2800</div>
<div style="left:975px;width:400px;text-align:right;top:312.5px;height:16px;line-height:16px;font-size:12px;color:#363636;white-space:pre;letter-spacing:-0.15px;">Available to Produce</div>
<div style="left:1384px;top:307px;width:95px;height:26px;background:#fff;border:1px solid #d8d8d8;"></div>
<div style="left:1074px;width:400px;text-align:right;top:313.0px;height:16px;line-height:16px;font-size:12px;color:#a3a3a3;white-space:pre;letter-spacing:-0.35px;">41,053.2800</div>
<div style="left:751px;width:400px;text-align:right;top:342.0px;height:16px;line-height:16px;font-size:12px;color:#363636;white-space:pre;">EAU</div>
<div style="left:1160px;top:340px;width:65px;height:20px;background:#fff;border:1px solid #a8a8a8;"></div>
<div style="left:820px;width:400px;text-align:right;top:342.0px;height:16px;line-height:16px;font-size:12px;color:#363636;white-space:pre;">0</div>
<div style="left:519px;top:408px;width:971px;height:596px;background:#fff;border:1px solid #b8b8b8;"></div>
<div style="left:520px;top:387px;width:130px;height:22px;background:#f7a21c;"></div>
<div style="left:285.5px;width:600px;text-align:center;top:391.5px;height:16px;line-height:16px;font-size:12px;color:#363636;white-space:pre;letter-spacing:-0.1px;">On-Hand by Location</div>
<div style="left:650px;top:388px;width:99px;height:21px;background:#e0e0e0;border:1px solid #c4c4c4;"></div>
<div style="left:399.5px;width:600px;text-align:center;top:391.5px;height:16px;line-height:16px;font-size:12px;color:#363636;white-space:pre;letter-spacing:-0.1px;">On-Hand by Lot</div>
<div style="left:748px;top:388px;width:72px;height:21px;background:#e0e0e0;border:1px solid #c4c4c4;"></div>
<div style="left:484.0px;width:600px;text-align:center;top:391.5px;height:16px;line-height:16px;font-size:12px;color:#363636;white-space:pre;letter-spacing:-0.1px;">Allocations</div>
<div style="left:819px;top:388px;width:59px;height:21px;background:#e0e0e0;border:1px solid #c4c4c4;"></div>
<div style="left:548.5px;width:600px;text-align:center;top:391.5px;height:16px;line-height:16px;font-size:12px;color:#363636;white-space:pre;letter-spacing:-0.1px;">Journals</div>
<div style="left:877px;top:388px;width:84px;height:21px;background:#e0e0e0;border:1px solid #c4c4c4;"></div>
<div style="left:619.0px;width:600px;text-align:center;top:391.5px;height:16px;line-height:16px;font-size:12px;color:#363636;white-space:pre;letter-spacing:-0.1px;">Classification</div>
<div style="left:960px;top:388px;width:69px;height:21px;background:#e0e0e0;border:1px solid #c4c4c4;"></div>
<div style="left:694.5px;width:600px;text-align:center;top:391.5px;height:16px;line-height:16px;font-size:12px;color:#363636;white-space:pre;letter-spacing:-0.1px;">Packaging</div>
<div style="left:1028px;top:388px;width:78px;height:21px;background:#e0e0e0;border:1px solid #c4c4c4;"></div>
<div style="left:767.0px;width:600px;text-align:center;top:391.5px;height:16px;line-height:16px;font-size:12px;color:#363636;white-space:pre;letter-spacing:-0.1px;">Net Change</div>
<div style="left:1105px;top:388px;width:106px;height:21px;background:#e0e0e0;border:1px solid #c4c4c4;"></div>
<div style="left:858.0px;width:600px;text-align:center;top:391.5px;height:16px;line-height:16px;font-size:12px;color:#363636;white-space:pre;letter-spacing:-0.1px;">Heats/Warranties</div>
<div style="left:1210px;top:388px;width:64px;height:21px;background:#e0e0e0;border:1px solid #c4c4c4;"></div>
<div style="left:942.0px;width:600px;text-align:center;top:391.5px;height:16px;line-height:16px;font-size:12px;color:#363636;white-space:pre;letter-spacing:-0.1px;">Revisions</div>
<div style="left:1273px;top:388px;width:56px;height:21px;background:#e0e0e0;border:1px solid #c4c4c4;"></div>
<div style="left:1001.0px;width:600px;text-align:center;top:391.5px;height:16px;line-height:16px;font-size:12px;color:#363636;white-space:pre;letter-spacing:-0.1px;">Routing</div>
<div style="left:1328px;top:388px;width:43px;height:21px;background:#e0e0e0;border:1px solid #c4c4c4;"></div>
<div style="left:1049.5px;width:600px;text-align:center;top:391.5px;height:16px;line-height:16px;font-size:12px;color:#363636;white-space:pre;letter-spacing:-0.1px;">Email</div>
<div style="left:530px;top:431px;width:949px;height:28px;background:#fff;border:1px solid #bcbcbc;border-radius:3px;"></div>
<div style="left:536px;top:423px;width:71px;height:9px;background:#fff;"></div>
<div style="left:540px;top:422.0px;height:16px;line-height:16px;font-size:12px;color:#363636;white-space:pre;-webkit-text-stroke:0.35px #363636;">List Criteria</div>
<svg style="left:668px;top:440px" width="13" height="13" viewBox="0 0 13 13"><circle cx="6.5" cy="6.5" r="5.8" fill="#fff" stroke="#4a4a4a" stroke-width="1"/><circle cx="6.5" cy="6.5" r="3" fill="#262626"/></svg>
<div style="left:685px;top:438.5px;height:16px;line-height:16px;font-size:12px;color:#363636;white-space:pre;letter-spacing:-0.15px;">All</div>
<svg style="left:710px;top:440px" width="13" height="13" viewBox="0 0 13 13"><circle cx="6.5" cy="6.5" r="5.8" fill="#fff" stroke="#4a4a4a" stroke-width="1"/></svg>
<div style="left:728px;top:438.5px;height:16px;line-height:16px;font-size:12px;color:#363636;white-space:pre;letter-spacing:-0.15px;">Available To Use</div>
<svg style="left:825px;top:440px" width="13" height="13" viewBox="0 0 13 13"><circle cx="6.5" cy="6.5" r="5.8" fill="#fff" stroke="#4a4a4a" stroke-width="1"/></svg>
<div style="left:843px;top:438.5px;height:16px;line-height:16px;font-size:12px;color:#363636;white-space:pre;letter-spacing:-0.15px;">AvailableToShip</div>
<svg style="left:937px;top:440px" width="13" height="13" viewBox="0 0 13 13"><circle cx="6.5" cy="6.5" r="5.8" fill="#fff" stroke="#4a4a4a" stroke-width="1"/></svg>
<div style="left:955px;top:438.5px;height:16px;line-height:16px;font-size:12px;color:#363636;white-space:pre;letter-spacing:-0.15px;">Package &amp; Hold</div>
<svg style="left:1051px;top:440px" width="13" height="13" viewBox="0 0 13 13"><circle cx="6.5" cy="6.5" r="5.8" fill="#fff" stroke="#4a4a4a" stroke-width="1"/></svg>
<div style="left:1069px;top:438.5px;height:16px;line-height:16px;font-size:12px;color:#363636;white-space:pre;letter-spacing:-0.15px;">On Consignment</div>
<svg style="left:1170px;top:440px" width="13" height="13" viewBox="0 0 13 13"><circle cx="6.5" cy="6.5" r="5.8" fill="#fff" stroke="#4a4a4a" stroke-width="1"/></svg>
<div style="left:1188px;top:438.5px;height:16px;line-height:16px;font-size:12px;color:#363636;white-space:pre;letter-spacing:-0.15px;">Non-WIP Only</div>
<svg style="left:1275px;top:440px" width="13" height="13" viewBox="0 0 13 13"><circle cx="6.5" cy="6.5" r="5.8" fill="#fff" stroke="#4a4a4a" stroke-width="1"/></svg>
<div style="left:1293px;top:438.5px;height:16px;line-height:16px;font-size:12px;color:#363636;white-space:pre;letter-spacing:-0.15px;">WIP Only</div>
<div style="left:529px;top:470px;width:951px;height:480px;background:#fff;border:1px solid #a6a6a6;"></div>
<div style="left:728px;top:471px;width:1px;height:102px;background:#c8c8c8;"></div>
<div style="left:978px;top:471px;width:1px;height:102px;background:#c8c8c8;"></div>
<div style="left:1178px;top:471px;width:1px;height:102px;background:#c8c8c8;"></div>
<div style="left:1328px;top:471px;width:1px;height:102px;background:#c8c8c8;"></div>
<div style="left:530px;top:500px;width:949px;height:1px;background:#c8c8c8;"></div>
<div style="left:530px;top:524px;width:949px;height:1px;background:#c8c8c8;"></div>
<div style="left:530px;top:548px;width:949px;height:1px;background:#c8c8c8;"></div>
<div style="left:530px;top:572px;width:949px;height:1px;background:#c8c8c8;"></div>
<div style="left:329.0px;width:600px;text-align:center;top:478.7px;height:16px;line-height:16px;font-size:13.5px;color:#363636;white-space:pre;letter-spacing:-0.1px;">Location Code</div>
<div style="left:553.5px;width:600px;text-align:center;top:478.7px;height:16px;line-height:16px;font-size:13.5px;color:#363636;white-space:pre;letter-spacing:-0.1px;">Location</div>
<div style="left:778.5px;width:600px;text-align:center;top:478.7px;height:16px;line-height:16px;font-size:13.5px;color:#363636;white-space:pre;letter-spacing:-0.1px;">Bin Code</div>
<div style="left:953.5px;width:600px;text-align:center;top:478.7px;height:16px;line-height:16px;font-size:13.5px;color:#363636;white-space:pre;letter-spacing:-0.1px;">Quantity</div>
<div style="left:1104.0px;width:600px;text-align:center;top:478.7px;height:16px;line-height:16px;font-size:13.5px;color:#363636;white-space:pre;letter-spacing:-0.1px;">Pieces</div>
<div style="left:533px;top:506.0px;height:16px;line-height:16px;font-size:12px;color:#363636;white-space:pre;letter-spacing:-0.3px;">Unknown</div>
<div style="left:732px;top:506.0px;height:16px;line-height:16px;font-size:12px;color:#363636;white-space:pre;letter-spacing:-0.3px;">Unknown</div>
<div style="left:982px;top:506.0px;height:16px;line-height:16px;font-size:12px;color:#363636;white-space:pre;letter-spacing:-0.3px;">Unknown</div>
<div style="left:924px;width:400px;text-align:right;top:506.0px;height:16px;line-height:16px;font-size:12px;color:#363636;white-space:pre;letter-spacing:-0.35px;">38,521.6160</div>
<div style="left:1075px;width:400px;text-align:right;top:506.0px;height:16px;line-height:16px;font-size:12px;color:#363636;white-space:pre;letter-spacing:-0.35px;">4,814.2392</div>
<div style="left:533px;top:530.0px;height:16px;line-height:16px;font-size:12px;color:#363636;white-space:pre;letter-spacing:-0.7px;">STOCK</div>
<div style="left:732px;top:530.0px;height:16px;line-height:16px;font-size:12px;color:#363636;white-space:pre;letter-spacing:-0.7px;">STOCK</div>
<div style="left:982px;top:530.0px;height:16px;line-height:16px;font-size:12px;color:#363636;white-space:pre;letter-spacing:-0.3px;">Unknown</div>
<div style="left:924px;width:400px;text-align:right;top:530.0px;height:16px;line-height:16px;font-size:12px;color:#363636;white-space:pre;letter-spacing:-0.35px;">281.6640</div>
<div style="left:1075px;width:400px;text-align:right;top:530.0px;height:16px;line-height:16px;font-size:12px;color:#363636;white-space:pre;letter-spacing:-0.35px;">35.2010</div>
<div style="left:533px;top:554.0px;height:16px;line-height:16px;font-size:12px;color:#363636;white-space:pre;letter-spacing:-0.7px;">THIRD</div>
<div style="left:732px;top:554.0px;height:16px;line-height:16px;font-size:12px;color:#363636;white-space:pre;letter-spacing:-0.7px;">THIRD STREET</div>
<div style="left:982px;top:554.0px;height:16px;line-height:16px;font-size:12px;color:#363636;white-space:pre;letter-spacing:-0.3px;">Unknown</div>
<div style="left:924px;width:400px;text-align:right;top:554.0px;height:16px;line-height:16px;font-size:12px;color:#363636;white-space:pre;letter-spacing:-0.35px;">2,250.0000</div>
<div style="left:1075px;width:400px;text-align:right;top:554.0px;height:16px;line-height:16px;font-size:12px;color:#363636;white-space:pre;letter-spacing:-0.35px;">281.1938</div>
<div style="left:526px;top:962px;width:135px;height:29px;background:#dddddd;border:1px solid #bcbcbc;"></div>
<div style="left:294.0px;width:600px;text-align:center;top:968.5px;height:16px;line-height:16px;font-size:9.8px;color:#363636;white-space:pre;">Transfer Between Locations</div>
<div style="left:995.5px;width:600px;text-align:center;top:955.5px;height:16px;line-height:16px;font-size:10px;color:#363636;white-space:pre;">Quantity Total</div>
<div style="left:1112.5px;width:600px;text-align:center;top:955.5px;height:16px;line-height:16px;font-size:10px;color:#363636;white-space:pre;letter-spacing:-0.25px;">Piece Total</div>
<div style="left:1238px;top:972px;width:115px;height:25px;background:#fff;border:1px solid #d8d8d8;"></div>
<div style="left:948px;width:400px;text-align:right;top:976.5px;height:16px;line-height:16px;font-size:12px;color:#a3a3a3;white-space:pre;letter-spacing:-0.35px;">41,053.280</div>
<div style="left:1357px;top:972px;width:111px;height:25px;background:#fff;border:1px solid #d8d8d8;"></div>
<div style="left:1063px;width:400px;text-align:right;top:976.5px;height:16px;line-height:16px;font-size:12px;color:#a3a3a3;white-space:pre;letter-spacing:-0.35px;">5,130.634</div>
</body></html>
